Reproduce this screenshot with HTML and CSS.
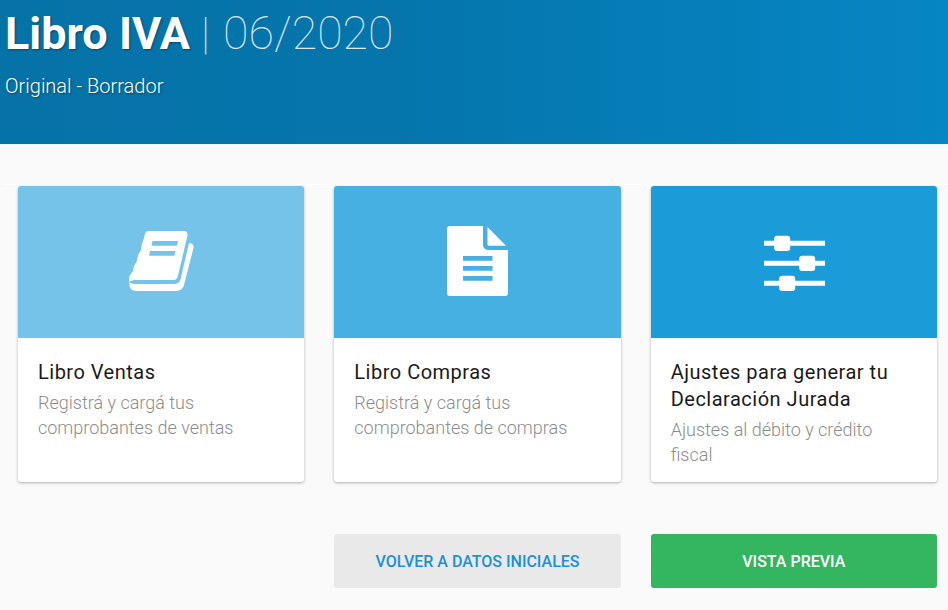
FILE: index.html
```html
<!DOCTYPE html>
<html lang="es">
<head>
    <meta charset="UTF-8">
    <title>Libro IVA</title>
    <link rel="stylesheet" href="styles.css">
</head>
<body>
    <header class="hero">
        <h1 class="hero-title"><strong>Libro IVA</strong><span class="hero-sep">|</span><span class="hero-period">06/2020</span></h1>
        <p class="hero-sub">Original - Borrador</p>
    </header>

    <main class="content">
        <div class="divider"></div>
        <div class="cards">
            <a href="#" class="card">
                <div class="card-top tone-light">
                    <svg class="icon" width="66" height="64" viewBox="0 0 66 64">
                        <path fill="#fff" d="M61 13 C64.500 13 66 15.500 65.500 18 L56 55 C55 59 51.500 61 47 61 H8 C3.500 61 0.500 57.500 1.500 52 C3 53.500 5 54 8 54 H46 C49 54 51.500 52.500 52.500 49.500 Z"/>
                        <path fill="#fff" d="M20 1 H56 C58.500 1 60 3 59.500 5.500 L50 45.500 C49.500 48.500 48 50 45 50 H8 C5.500 50 3 50.500 1.500 52 C0.500 50 1 47.500 2 45 L5 41 L6 36 L9 31 L10 25 L13 20 L14 14 L16 8 C17 3 18 1 20 1 Z"/>
                        <path fill="#75c3e9" d="M24.500 11 H50 L48.800 15.700 H23.500 Z M22 21 H47.500 L46.300 25.700 H21 Z"/>
                    </svg>
                </div>
                <div class="card-body">
                    <h2>Libro Ventas</h2>
                    <p>Registrá y cargá tus comprobantes de ventas</p>
                </div>
            </a>
            <a href="#" class="card">
                <div class="card-top tone-mid">
                    <svg class="icon" width="61" height="72" viewBox="0 1 61 72">
                        <path fill="#fff" d="M3 1h33v19a5 5 0 0 0 5 5h20v43a3 3 0 0 1-3 3H3a3 3 0 0 1-3-3V4a3 3 0 0 1 3-3z"/>
                        <path fill="#fff" d="M40.500 2L59 20.700H42a1.500 1.500 0 0 1-1.500-1.500z"/>
                        <path fill="#47b0e2" d="M16 31h29.500v4.700H16zM16 41h29.500v4.700H16zM16 51h29.500v4.700H16z"/>
                    </svg>
                </div>
                <div class="card-body">
                    <h2>Libro Compras</h2>
                    <p>Registrá y cargá tus comprobantes de compras</p>
                </div>
            </a>
            <a href="#" class="card">
                <div class="card-top tone-dark">
                    <svg class="icon" width="62" height="60" viewBox="0 0 62 60">
                        <path fill="#fff" d="M1 8.700h61v5H1zM1 28.700h61v5H1zM1 48.700h61v5H1z"/>
                        <rect fill="#fff" x="11.200" y="3.700" width="16" height="15.300" rx="3"/>
                        <rect fill="#fff" x="36.200" y="23.700" width="16" height="15.300" rx="3"/>
                        <rect fill="#fff" x="16.200" y="43.700" width="16" height="15.300" rx="3"/>
                    </svg>
                </div>
                <div class="card-body">
                    <h2>Ajustes para generar tu Declaración Jurada</h2>
                    <p>Ajustes al débito y crédito fiscal</p>
                </div>
            </a>
        </div>

        <div class="cards actions">
            <div></div>
            <a href="#" class="btn btn-back">VOLVER A DATOS INICIALES</a>
            <a href="#" class="btn btn-next">VISTA PREVIA</a>
        </div>
    </main>
</body>
</html>
```

FILE: styles.css
```css
* {
    box-sizing: border-box;
}

body {
    font-family: 'Roboto', sans-serif;
    background-color: #fafafa;
    margin: 0;
    padding: 0;
    overflow: hidden;
}

.hero {
    height: 144px;
    background: linear-gradient(90deg, #0573a8 0%, #0575ab 40%, #0686c4 100%);
    color: #fff;
    padding: 6px 5px 0;
}

.hero-title {
    display: flex;
    align-items: baseline;
    margin: 0;
    font-size: 45px;
    line-height: 54px;
    font-weight: 100;
}

.hero-title strong {
    font-weight: 700;
    text-shadow: 1px 1px 2px rgba(0, 0, 0, 0.4);
}

.hero-sep {
    margin: 0 13px 0 11px;
    color: rgba(255, 255, 255, 0.8);
    font-weight: 100;
}

.hero-period {
    font-size: 46.5px;
    color: rgba(255, 255, 255, 0.85);
    font-weight: 100;
}

.hero-sub {
    margin: 12px 0 0;
    font-size: 20px;
    line-height: 26px;
    font-weight: 300;
    text-shadow: 1px 1px 2px rgba(0, 0, 0, 0.4);
}

.content {
    padding: 40px 11px 0 18px;
}

.divider {
    height: 1px;
    background-color: #fff;
    margin: 0 -11px 1px -15px;
}

.cards {
    display: grid;
    grid-template-columns: repeat(3, 1fr);
    column-gap: 30px;
}

.card {
    display: block;
    height: 296px;
    background-color: #fff;
    border-radius: 3px;
    box-shadow: 0 1px 3px rgba(0, 0, 0, 0.3);
    text-decoration: none;
    overflow: hidden;
}

.card-top {
    height: 152px;
    display: flex;
    align-items: center;
    justify-content: center;
}

.tone-light {
    background-color: #75c3e9;
}

.tone-mid {
    background-color: #47b0e2;
}

.tone-dark {
    background-color: #1b9cd9;
}

.card-body {
    padding: 21px 20px 0;
}

.card-body h2 {
    margin: 0;
    font-size: 20px;
    line-height: 27px;
    font-weight: 400;
    letter-spacing: 0.5px;
    color: #1a1a1a;
}

.card-body p {
    margin: 4px 0 0;
    font-size: 18px;
    line-height: 25px;
    font-weight: 300;
    color: #8c8c8c;
}

.actions {
    margin-top: 52px;
}

.btn {
    display: flex;
    align-items: center;
    justify-content: center;
    height: 54px;
    border-radius: 3px;
    font-size: 16px;
    font-weight: 500;
    text-decoration: none;
}

.btn-back {
    background-color: #e9e9e9;
    color: #1a92d6;
}

.btn-next {
    background-color: #34b55f;
    color: #fff;
}
```
